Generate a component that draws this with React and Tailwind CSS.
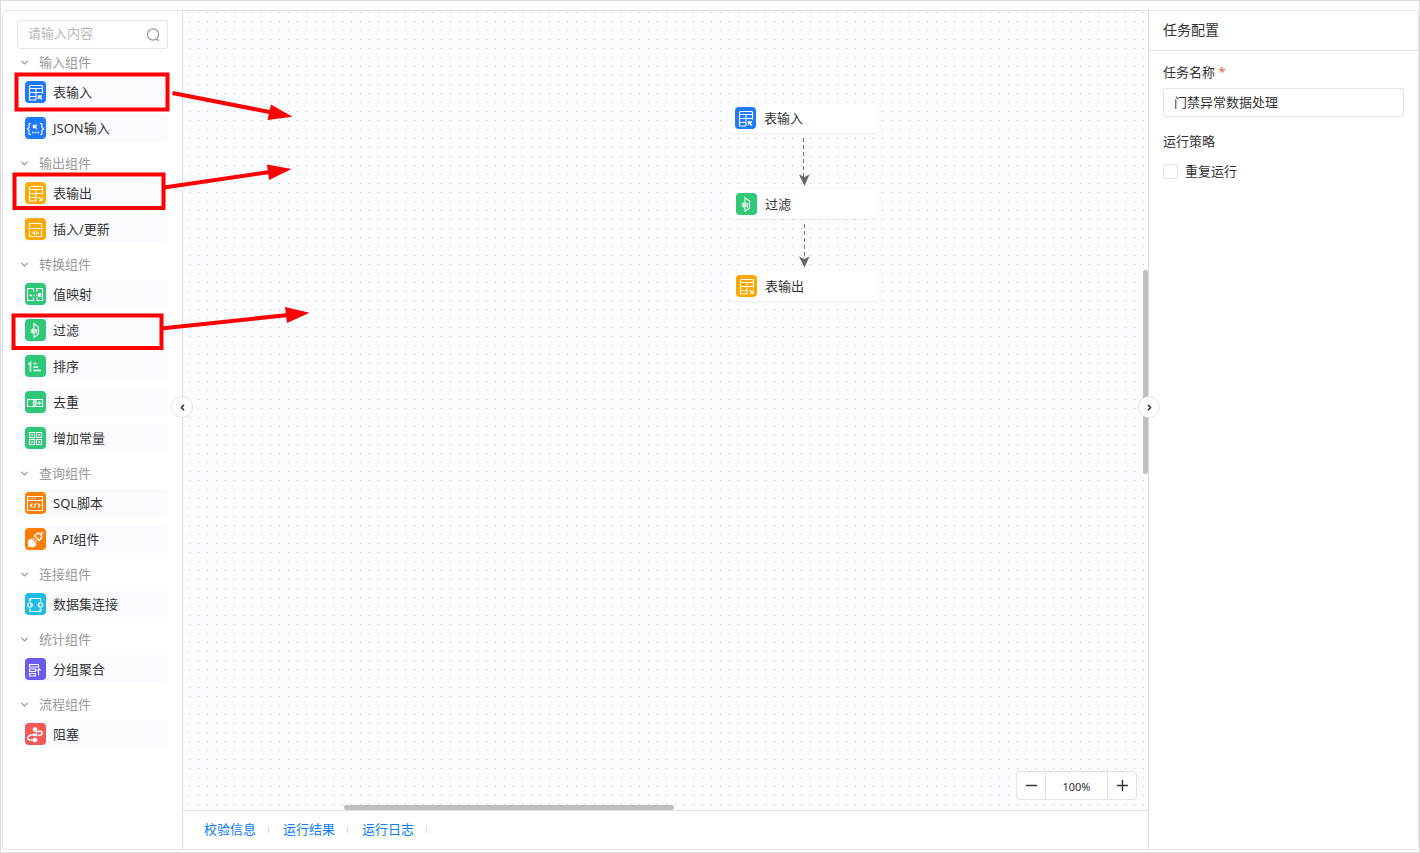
import { ChevronDown, ChevronLeft, ChevronRight, Minus, Plus } from "lucide-react";

// -------------------------------------------------------------------------
// Component glyphs (white strokes on a coloured tile)
// -------------------------------------------------------------------------
const TableGrid = () => (
	<path d="M17.5 11.5V4.500Q17.500 3.500 16.500 3.500h-11Q4.500 3.500 4.500 4.500V18H11M4.500 6.500h13M4.500 10.500h13M4.500 14.500H11M11 6.500V18" />
);

const GLYPHS = {
	tableIn: (
		<>
			<TableGrid />
			<path d="M13.500 17v-3H17M13.500 14l3.500 3.500" strokeWidth="1.300" />
		</>
	),
	tableOut: (
		<>
			<TableGrid />
			<path d="M17 14.500V17.500h-3M13.500 14l3.500 3.500" strokeWidth="1.200" />
		</>
	),
	json: (
		<>
			<path d="M6 5.500H5Q4 5.500 4 6.500v3L2.500 11 4 12.500v3q0 1 1 1h1M15 5.500h1q1 0 1 1v3l1.500 1.500-1.500 1.500v3q0 1-1 1h-1" />
			<path d="M8.500 10.500V7.500H12M8.500 7.500l3.500 3.500" strokeWidth="1.300" />
			<path d="M7 14.500h1.500M9.700 14.500h1.500M12.500 14.500H14" strokeWidth="1.500" />
		</>
	),
	upsert: (
		<>
			<path d="M4.500 8V4.500h12V8M3 9.500h15M4.500 11.500v6h12v-6" />
			<path d="M7 14h2.500V12M9.500 14v2M14 14h-2.500V12M11.500 14v2" />
		</>
	),
	mapping: (
		<>
			<path d="M8.500 7.500V4.500h-6v12h6v-3M12 7.500V4.500h5.500v12H12v-3" />
			<path d="M4.500 11.500h2.500M8.500 11.500h1M11 11.500h1" strokeWidth="1.500" />
			<rect x="13.500" y="9.500" width="2" height="3" />
		</>
	),
	filter: (
		<>
			<path d="M9 3.500v14l4.500-3.500V7z" />
			<path d="M5.500 10h6M5.500 12h6M7.500 8.500v5M11.500 9v4.500" />
		</>
	),
	sort: (
		<>
			<path d="M3.500 8.500L5.500 6.500v9" strokeWidth="1.500" />
			<path d="M8.500 7.500h3M8.500 11h4.500M8.500 14.500H16" strokeWidth="1.500" />
		</>
	),
	dedupe: (
		<>
			<path d="M2.500 7.500h15v7h-15zM8.500 7.500v7" />
			<path d="M8.500 7.500h2.500v7H8.500z" fill="white" fillOpacity="0.500" />
			<path d="M12 11h3.500M14 9.500l1.500 1.500-1.500 1.500" />
		</>
	),
	constant: (
		<>
			<path d="M4.500 4.500h5v5h-5zM11.500 4.500h5v5h-5zM4.500 11.500h5v5h-5zM11.500 11.500h5v5h-5z" />
			<path d="M6.200 7h1.600M13.200 7h1.600M6.200 14h1.600M13.200 14h1.600" strokeWidth="1.600" />
		</>
	),
	sql: (
		<>
			<path d="M2.500 3.500h15v14h-15zM2.500 7.500h15" />
			<path d="M5 5.500h1M7 5.500h1M9 5.500h1" />
			<path d="M7.500 10.500l-2 2 2 2M13 10.500l2 2-2 2M11 10l-2 5" strokeWidth="1.400" />
		</>
	),
	api: (
		<>
			<path d="M5.500 10l5.500 5.500-2 1.800q-2.500 1.200-4.500-.8t-.8-4.500z" fill="white" />
			<path d="M9.500 7l2-2q2-1.500 4 .3t.7 4L14 11.500zM15.700 5.300L18 3M3 18l1.800-1.800M7.500 11.500l2-2M9.500 13.500l2-2" strokeWidth="1.400" />
		</>
	),
	join: (
		<>
			<path d="M5 7.500V4.500h10.500v3M5 14.500v3h10.500v-3M3.500 6h3M14 16h3" />
			<circle cx="5" cy="11" r="2.200" />
			<circle cx="15.500" cy="11" r="2.200" />
			<path d="M5 11h3M12.500 11h3" />
		</>
	),
	group: (
		<>
			<path d="M4.500 5.500h9v2.500h-9zM4.500 10h6v2.500h-6zM4.500 14.500h6V17h-6z" />
			<path d="M10.500 11h3M13.500 16.500V9.500l2 2" />
		</>
	),
	block: (
		<>
			<g fill="white">
				<circle cx="10" cy="5.500" r="1.800" />
				<ellipse cx="10" cy="10.700" rx="2" ry="1" />
				<circle cx="10" cy="16" r="1.800" />
			</g>
			<path d="M11 8q5.500-2 6.200.8.500 2.500-4.200 2.700M8.500 10.500Q3 11 2.800 14q.2 2.500 5 2" strokeWidth="1.500" />
		</>
	),
};

const Glyph = ({ name, color }) => (
	<span className={`flex h-[22px] w-[21px] shrink-0 items-center justify-center rounded ${color}`}>
		<svg viewBox="0 0 21 21" className="h-[21px] w-[21px]" fill="none" stroke="white" strokeWidth="1.1" aria-hidden="true">
			{GLYPHS[name]}
		</svg>
	</span>
);

// -------------------------------------------------------------------------
// Data
// -------------------------------------------------------------------------
const BLUE = "bg-[#2179ff]";
const AMBER = "bg-[#ffa800]";
const GREEN = "bg-[#2fc876]";
const ORANGE = "bg-[#ff7d00]";

const GROUPS = [
	{
		title: "输入组件",
		items: [
			{ label: "表输入", icon: "tableIn", color: BLUE },
			{ label: "JSON输入", icon: "json", color: BLUE },
		],
	},
	{
		title: "输出组件",
		items: [
			{ label: "表输出", icon: "tableOut", color: AMBER },
			{ label: "插入/更新", icon: "upsert", color: AMBER },
		],
	},
	{
		title: "转换组件",
		items: [
			{ label: "值映射", icon: "mapping", color: GREEN },
			{ label: "过滤", icon: "filter", color: GREEN },
			{ label: "排序", icon: "sort", color: GREEN },
			{ label: "去重", icon: "dedupe", color: GREEN },
			{ label: "增加常量", icon: "constant", color: GREEN },
		],
	},
	{
		title: "查询组件",
		items: [
			{ label: "SQL脚本", icon: "sql", color: ORANGE },
			{ label: "API组件", icon: "api", color: ORANGE },
		],
	},
	{ title: "连接组件", items: [{ label: "数据集连接", icon: "join", color: "bg-[#1fbde4]" }] },
	{ title: "统计组件", items: [{ label: "分组聚合", icon: "group", color: "bg-[#6a5af0]" }] },
	{ title: "流程组件", items: [{ label: "阻塞", icon: "block", color: "bg-[#f25a5a]" }] },
];

const NODES = [
	{ label: "表输入", icon: "tableIn", color: BLUE, place: "left-[545px] top-[93px]" },
	{ label: "过滤", icon: "filter", color: GREEN, place: "left-[546px] top-[179px]" },
	{ label: "表输出", icon: "tableOut", color: AMBER, place: "left-[546px] top-[261px]" },
];

const TABS = ["校验信息", "运行结果", "运行日志"];

// -------------------------------------------------------------------------
// Left palette
// -------------------------------------------------------------------------
const Palette = () => (
	<aside className="relative w-[180px] shrink-0 border-r border-[#dcdcdc] px-[14px] pt-[9px]">
		<label className="flex h-[29px] items-center rounded-[3px] border border-[#e2e3e6] pl-[10px] pr-[7px]">
			<input
				type="text"
				aria-label="搜索组件"
				placeholder="请输入内容"
				className="min-w-0 flex-1 pb-[3px] text-[13px] leading-5 outline-none placeholder:text-[#b8b8b8]"
			/>
			<svg viewBox="0 0 14 14" className="h-[14px] w-[14px]" fill="none" stroke="#999" strokeWidth="1.2" aria-hidden="true">
				<circle cx="7" cy="6.5" r="5.6" />
				<path d="M10.5 10.5l2.300 2.300" />
			</svg>
		</label>
		{GROUPS.map((group) => (
			<section key={group.title}>
				<button type="button" className="flex h-[29px] w-full items-center gap-[9px] pb-[3px] pl-[2px] text-[13px] leading-5 text-[#999]">
					<ChevronDown size={11} strokeWidth={3} />
					{group.title}
				</button>
				<ul>
					{group.items.map((item) => (
						<li key={item.label} className="mb-2 flex h-7 items-center gap-[7px] rounded bg-[#fafbff] pl-2 text-[13px] leading-5 text-[#333]">
							<Glyph name={item.icon} color={item.color} />
							{item.label}
						</li>
					))}
				</ul>
			</section>
		))}
		<button
			type="button"
			aria-label="收起组件栏"
			className="absolute -right-[11px] top-[385px] z-10 flex h-[22px] w-[22px] items-center justify-center rounded-full border border-[#e2e2e2] bg-white text-[#222]"
		>
			<ChevronLeft size={9} strokeWidth={4} />
		</button>
	</aside>
);

// -------------------------------------------------------------------------
// Flow canvas
// -------------------------------------------------------------------------
const Canvas = () => (
	<div className="relative flex-1 overflow-hidden bg-[#fbfcff]">
		<svg className="absolute inset-0 h-full w-full" aria-hidden="true">
			<defs>
				<pattern id="dots" width="9" height="9" patternUnits="userSpaceOnUse">
					<rect x="6" y="1" width="1" height="1" fill="#bfc2c9" />
				</pattern>
			</defs>
			<rect width="100%" height="100%" fill="url(#dots)" />
			{/* Edges */}
			<g stroke="#777" strokeWidth="1" strokeDasharray="4 3">
				<path d="M620.5 127V166" />
				<path d="M621.5 213V248" />
			</g>
			<g fill="#666">
				<path d="M616 163.500l5.500 2.500 5-2.500-5 11.500z" />
				<path d="M616 245.500l5.500 2.500 5-2.500-5 11z" />
			</g>
		</svg>

		{NODES.map((node) => (
			<div
				key={node.label}
				className={`absolute flex h-[29px] w-[150px] items-center gap-2 rounded bg-white pb-px pl-[7px] text-[13px] leading-5 text-[#333] shadow-[0_1px_2px_rgba(0,0,0,0.06)] ${node.place}`}
			>
				<Glyph name={node.icon} color={node.color} />
				{node.label}
			</div>
		))}

		{/* Scroll thumbs */}
		<div className="absolute right-0 top-[259px] h-[204px] w-[5px] rounded-full bg-[#bfbfbf]" />
		<div className="absolute bottom-0 left-[161px] h-[5px] w-[330px] rounded-full bg-[#bfbfbf]" />

		{/* Zoom */}
		<div className="absolute bottom-[10px] right-[11px] flex h-[29px] w-[121px] rounded border border-[#e2e3e6] bg-white text-[#333]">
			<button type="button" aria-label="缩小" className="flex w-[29px] items-center justify-center border-r border-[#e2e3e6]">
				<Minus size={17} strokeWidth={2} />
			</button>
			<span className="flex-1 pt-[5px] text-center text-[11px] leading-5">100%</span>
			<button type="button" aria-label="放大" className="flex w-[29px] items-center justify-center border-l border-[#e2e3e6]">
				<Plus size={17} strokeWidth={2} />
			</button>
		</div>
	</div>
);

// -------------------------------------------------------------------------
// Right config panel
// -------------------------------------------------------------------------
const Config = () => (
	<aside className="relative w-[270px] shrink-0 border-l border-[#dcdcdc] text-[13px] leading-5 text-[#333]">
		<h2 className="h-10 border-b border-[#e2e3e6] px-[14px] pt-[9px] text-sm">任务配置</h2>
		<form className="px-[14px] pt-[11px]">
			<label htmlFor="taskName" className="block">
				任务名称 <span className="text-[#ff5c35]">*</span>
			</label>
			<input
				id="taskName"
				type="text"
				defaultValue="门禁异常数据处理"
				className="mt-[6px] block h-[29px] w-full max-w-[241px] rounded-[3px] border border-[#e2e3e6] px-[10px] pb-[2px] outline-none"
			/>
			<p className="mt-[14px]">运行策略</p>
			<label className="mt-[10px] flex items-center gap-[7px]">
				<input type="checkbox" className="h-[15px] w-[15px] appearance-none rounded-[2px] border border-[#e2e3e6] bg-white" />
				重复运行
			</label>
		</form>
		<button
			type="button"
			aria-label="收起配置栏"
			className="absolute -left-[11px] top-[385px] z-10 flex h-[22px] w-[22px] items-center justify-center rounded-full border border-[#e2e2e2] bg-white text-[#222]"
		>
			<ChevronRight size={9} strokeWidth={4} />
		</button>
	</aside>
);

// Red callouts drawn over the palette and the canvas
const Callouts = () => (
	<svg className="pointer-events-none absolute -left-px -top-px z-20 h-[360px] w-[320px]" fill="none" stroke="#ff0000" strokeWidth="4" aria-hidden="true">
		<rect x="16.5" y="74.5" width="151" height="35" />
		<rect x="14.5" y="174.5" width="149" height="33.5" />
		<rect x="13.500" y="315.500" width="148" height="32.500" />
		<path d="M172.5 93L272 112.5M164 187.500L270 172M161 328.500L288 315" />
		<g fill="#ff0000" stroke="none">
			<path d="M271 104.500L292.500 116.700 267.500 120z" />
			<path d="M267 164.500L291.500 169 269 180z" />
			<path d="M285 307L309.500 312.700 287 323z" />
		</g>
	</svg>
);

export default function App() {
	return (
		<div className="relative flex min-h-screen w-full border border-[#dcdcdc] bg-white pb-[2px] pl-px pt-[9px] font-['Noto_Sans','Noto_Sans_CJK_SC',sans-serif]">
			<div className="flex flex-1 rounded border border-[#e4e4e4]">
				<Palette />
				<main className="flex min-w-0 flex-1 flex-col">
					<Canvas />
					<nav className="flex h-[39px] items-center border-t border-[#e2e3e6] pb-[2px] pl-[21px] text-[13px] leading-5 text-[#0a7cff]">
						{TABS.map((tab) => (
							<div key={tab} className="flex items-center">
								<button type="button">{tab}</button>
								<span className="ml-3 mr-[14px] h-[7px] w-px bg-[#dcdcdc]" />
							</div>
						))}
					</nav>
				</main>
				<Config />
			</div>
			<Callouts />
		</div>
	);
}
